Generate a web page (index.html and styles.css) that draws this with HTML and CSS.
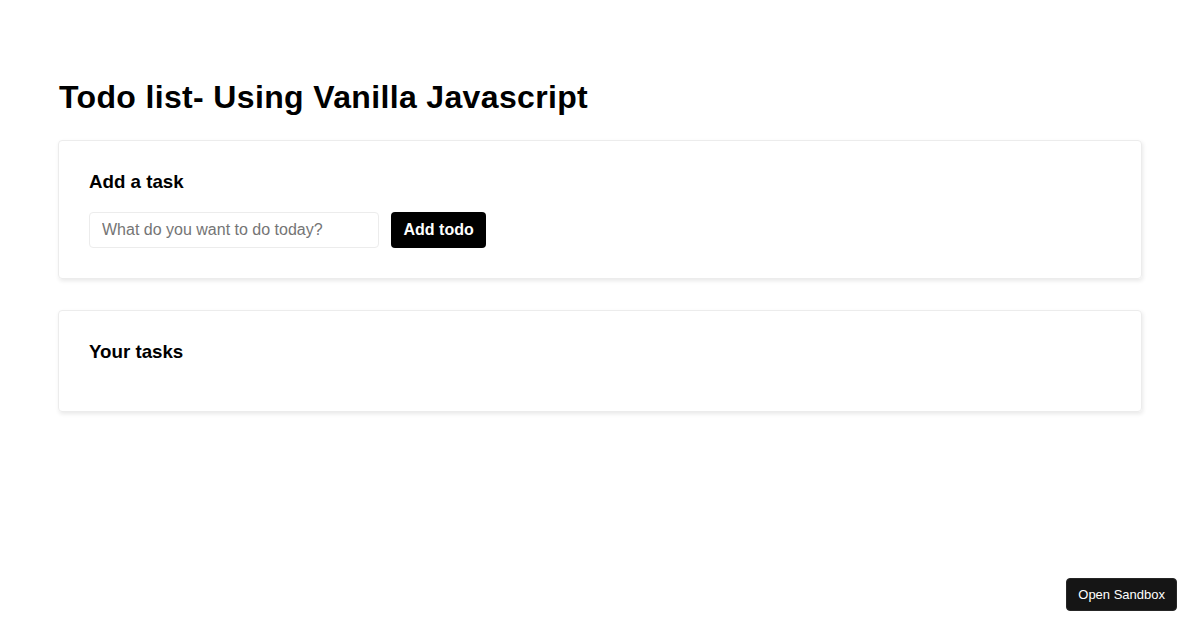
FILE: index.html
```html
<!DOCTYPE html>
<html>
<head>
<meta charset="utf-8">
<link rel="stylesheet" href="styles.css">
</head>
<body>
<div class="container">
  <h1 class="title">Todo list- Using Vanilla Javascript</h1>
  <section class="card">
    <h3 class="card-title">Add a task</h3>
    <form class="add-form">
      <input class="todo-input" type="text" placeholder="What do you want to do today?">
      <button class="add-btn" type="button">Add todo</button>
    </form>
  </section>
  <section class="card">
    <h3 class="card-title">Your tasks</h3>
  </section>
</div>
<a class="sandbox-btn">Open Sandbox</a>
</body>
</html>
```
FILE: styles.css
```css
html, body {
  margin: 0;
  padding: 0;
  background: #fff;
}
body {
  font-family: "Liberation Sans", Arial, sans-serif;
  color: #000;
}
.container {
  padding: 79px 58px 0 58px;
}
.title {
  margin: 0 0 24px 1px;
  font-size: 32px;
  font-weight: bold;
  line-height: 37px;
  letter-spacing: 0.35px;
}
.card {
  border: 1px solid #ececec;
  border-radius: 4px;
  box-shadow: 1px 2px 4px rgba(0, 0, 0, 0.09);
  padding: 30px;
  margin-bottom: 31px;
}
.card-title {
  margin: 0 0 18.72px 0;
  font-size: 18.72px;
  font-weight: bold;
}
.add-form {
  display: flex;
  gap: 12px;
  margin: 0;
}
.todo-input {
  box-sizing: border-box;
  width: 290px;
  height: 36px;
  border: 1px solid #ececec;
  border-radius: 4px;
  padding: 0 12px;
  font-family: "Liberation Sans", Arial, sans-serif;
  font-size: 16px;
  outline: none;
}
.todo-input::placeholder {
  color: #757575;
}
.add-btn {
  box-sizing: border-box;
  height: 36px;
  padding: 0 12.5px;
  background: #000;
  color: #fff;
  border: none;
  border-radius: 4px;
  font-family: "Liberation Sans", Arial, sans-serif;
  font-size: 16px;
  font-weight: bold;
}
.sandbox-btn {
  position: fixed;
  right: 23px;
  bottom: 19px;
  box-sizing: border-box;
  height: 33px;
  padding: 0 11px;
  display: flex;
  align-items: center;
  background: #151515;
  color: #fff;
  border: 1px solid #262626;
  border-radius: 4px;
  font-family: "Liberation Sans", Arial, sans-serif;
  font-size: 13px;
}
```
